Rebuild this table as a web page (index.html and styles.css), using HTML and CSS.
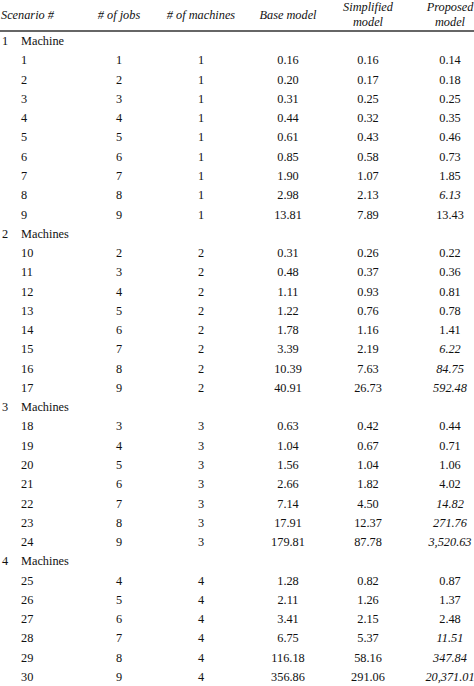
FILE: index.html
```html
<!DOCTYPE html>
<html>
<head>
<meta charset="utf-8">
<link rel="stylesheet" href="styles.css">
</head>
<body>
<div class="table">
  <div class="th first">Scenario #</div>
  <div class="th">#&nbsp;of jobs</div>
  <div class="th">#&nbsp;of machines</div>
  <div class="th">Base model</div>
  <div class="th">Simplified<br>model</div>
  <div class="th">Proposed<br>model</div>
  <div class="rule"></div>

  <div class="grp"><span class="gn">1</span>Machine</div>
  <div class="c first">1</div><div class="c">1</div><div class="c">1</div><div class="c">0.16</div><div class="c">0.16</div><div class="c">0.14</div>
  <div class="c first">2</div><div class="c">2</div><div class="c">1</div><div class="c">0.20</div><div class="c">0.17</div><div class="c">0.18</div>
  <div class="c first">3</div><div class="c">3</div><div class="c">1</div><div class="c">0.31</div><div class="c">0.25</div><div class="c">0.25</div>
  <div class="c first">4</div><div class="c">4</div><div class="c">1</div><div class="c">0.44</div><div class="c">0.32</div><div class="c">0.35</div>
  <div class="c first">5</div><div class="c">5</div><div class="c">1</div><div class="c">0.61</div><div class="c">0.43</div><div class="c">0.46</div>
  <div class="c first">6</div><div class="c">6</div><div class="c">1</div><div class="c">0.85</div><div class="c">0.58</div><div class="c">0.73</div>
  <div class="c first">7</div><div class="c">7</div><div class="c">1</div><div class="c">1.90</div><div class="c">1.07</div><div class="c">1.85</div>
  <div class="c first">8</div><div class="c">8</div><div class="c">1</div><div class="c">2.98</div><div class="c">2.13</div><div class="c it">6.13</div>
  <div class="c first">9</div><div class="c">9</div><div class="c">1</div><div class="c">13.81</div><div class="c">7.89</div><div class="c">13.43</div>

  <div class="grp"><span class="gn">2</span>Machines</div>
  <div class="c first">10</div><div class="c">2</div><div class="c">2</div><div class="c">0.31</div><div class="c">0.26</div><div class="c">0.22</div>
  <div class="c first">11</div><div class="c">3</div><div class="c">2</div><div class="c">0.48</div><div class="c">0.37</div><div class="c">0.36</div>
  <div class="c first">12</div><div class="c">4</div><div class="c">2</div><div class="c">1.11</div><div class="c">0.93</div><div class="c">0.81</div>
  <div class="c first">13</div><div class="c">5</div><div class="c">2</div><div class="c">1.22</div><div class="c">0.76</div><div class="c">0.78</div>
  <div class="c first">14</div><div class="c">6</div><div class="c">2</div><div class="c">1.78</div><div class="c">1.16</div><div class="c">1.41</div>
  <div class="c first">15</div><div class="c">7</div><div class="c">2</div><div class="c">3.39</div><div class="c">2.19</div><div class="c it">6.22</div>
  <div class="c first">16</div><div class="c">8</div><div class="c">2</div><div class="c">10.39</div><div class="c">7.63</div><div class="c it">84.75</div>
  <div class="c first">17</div><div class="c">9</div><div class="c">2</div><div class="c">40.91</div><div class="c">26.73</div><div class="c it">592.48</div>

  <div class="grp"><span class="gn">3</span>Machines</div>
  <div class="c first">18</div><div class="c">3</div><div class="c">3</div><div class="c">0.63</div><div class="c">0.42</div><div class="c">0.44</div>
  <div class="c first">19</div><div class="c">4</div><div class="c">3</div><div class="c">1.04</div><div class="c">0.67</div><div class="c">0.71</div>
  <div class="c first">20</div><div class="c">5</div><div class="c">3</div><div class="c">1.56</div><div class="c">1.04</div><div class="c">1.06</div>
  <div class="c first">21</div><div class="c">6</div><div class="c">3</div><div class="c">2.66</div><div class="c">1.82</div><div class="c">4.02</div>
  <div class="c first">22</div><div class="c">7</div><div class="c">3</div><div class="c">7.14</div><div class="c">4.50</div><div class="c it">14.82</div>
  <div class="c first">23</div><div class="c">8</div><div class="c">3</div><div class="c">17.91</div><div class="c">12.37</div><div class="c it">271.76</div>
  <div class="c first">24</div><div class="c">9</div><div class="c">3</div><div class="c">179.81</div><div class="c">87.78</div><div class="c it">3,520.63</div>

  <div class="grp"><span class="gn">4</span>Machines</div>
  <div class="c first">25</div><div class="c">4</div><div class="c">4</div><div class="c">1.28</div><div class="c">0.82</div><div class="c">0.87</div>
  <div class="c first">26</div><div class="c">5</div><div class="c">4</div><div class="c">2.11</div><div class="c">1.26</div><div class="c">1.37</div>
  <div class="c first">27</div><div class="c">6</div><div class="c">4</div><div class="c">3.41</div><div class="c">2.15</div><div class="c">2.48</div>
  <div class="c first">28</div><div class="c">7</div><div class="c">4</div><div class="c">6.75</div><div class="c">5.37</div><div class="c it">11.51</div>
  <div class="c first">29</div><div class="c">8</div><div class="c">4</div><div class="c">116.18</div><div class="c">58.16</div><div class="c it">347.84</div>
  <div class="c first">30</div><div class="c">9</div><div class="c">4</div><div class="c">356.86</div><div class="c">291.06</div><div class="c it">20,371.01</div>
</div>
</body>
</html>
```

FILE: styles.css
```css
html, body {
  margin: 0;
  padding: 0;
  background: #ffffff;
  overflow: hidden;
}

body {
  width: 474px;
  height: 686px;
  font-family: "Liberation Serif", "Times New Roman", serif;
  font-size: 12.3px;
  color: #111111;
}

.table {
  display: grid;
  grid-template-columns: 80px 78px 86px 88px 72px 92px;
  grid-template-rows: 30px 2px;
  grid-auto-rows: 19.27px;
  width: 496px;
}

.th {
  font-style: italic;
  text-align: center;
  line-height: 15px;
  display: flex;
  align-items: center;
  justify-content: center;
  white-space: nowrap;
}

.th.first {
  justify-content: flex-start;
  padding-left: 1px;
}

.rule {
  grid-column: 1 / -1;
  background: #666666;
}

.grp {
  grid-column: 1 / -1;
  display: flex;
  align-items: center;
  white-space: nowrap;
}

.gn {
  width: 19px;
  padding-left: 2px;
}

.c {
  display: flex;
  align-items: center;
  justify-content: center;
  white-space: nowrap;
}

.c.first {
  justify-content: flex-start;
  padding-left: 21px;
}

.it {
  font-style: italic;
}
```
